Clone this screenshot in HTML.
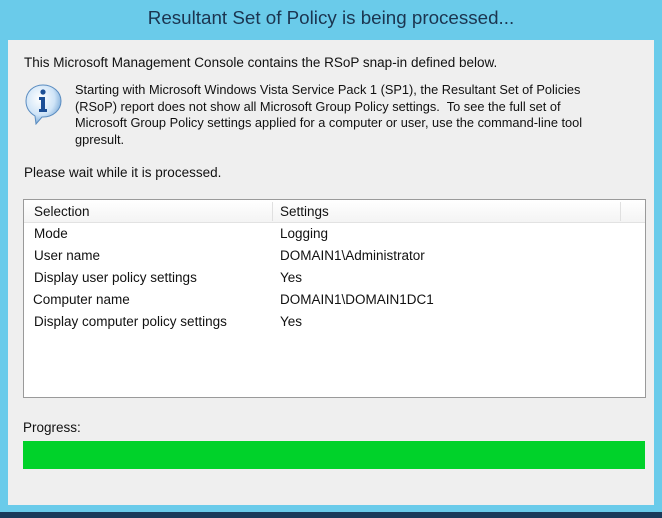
<!DOCTYPE html>
<html><head><style>
body{margin:0;width:662px;height:518px;background:#6acbea;position:relative;overflow:hidden;font-family:"Liberation Sans",sans-serif;font-size:13.5px;color:#111;}
.title{position:absolute;left:0;top:7px;width:662px;text-align:center;font-size:18.8px;color:#1b3550;}
.client{position:absolute;left:8px;top:40px;width:646px;height:465px;background:#efefef;}
.bottom{position:absolute;left:0;top:512px;width:662px;height:6px;background:#1a3a5a;}
.t{position:absolute;white-space:nowrap;}
.table{position:absolute;left:23px;top:199px;width:621px;height:197px;background:#fff;border:1px solid #9a9a9a;}
.hdr{position:absolute;left:0;top:0;width:621px;height:22px;background:linear-gradient(#fff,#f4f4f4);border-bottom:1px solid #e2e2e2;}
.bar{position:absolute;left:23px;top:441px;width:622px;height:28px;background:#00d22a;}
</style></head><body>
<div class="title">Resultant Set of Policy is being processed...</div>
<div class="client"></div>
<div class="bottom"></div>
<div class="t" style="left:24px;top:55px">This Microsoft Management Console contains the RSoP snap-in defined below.</div>
<svg style="position:absolute;left:24px;top:83px" width="40" height="42" viewBox="0 0 40 42">
<defs><radialGradient id="g" cx="0.4" cy="0.35" r="0.7"><stop offset="0" stop-color="#fff"/><stop offset="0.6" stop-color="#cfe4f7"/><stop offset="1" stop-color="#6a9fd2"/></radialGradient></defs>
<path d="M19 2C9 2 2 9 2 18c0 7 4 12 9 15l1 8 6-7c1 0 1 0 1 0 10 0 18-7 18-16S29 2 19 2z" fill="url(#g)" stroke="#5a8cc0" stroke-width="1"/>
<circle cx="19" cy="9" r="2.6" fill="#1c4f96"/>
<path d="M15 14h6v12h2v3h-8v-3h2v-9h-2z" fill="#1c4f96"/>
</svg>
<div class="t" style="left:75px;top:82px;line-height:16.5px;font-size:12.8px">Starting with Microsoft Windows Vista Service Pack 1 (SP1), the Resultant Set of Policies<br>(RSoP) report does not show all Microsoft Group Policy settings.&nbsp; To see the full set of<br>Microsoft Group Policy settings applied for a computer or user, use the command-line tool<br>gpresult.</div>
<div class="t" style="left:24px;top:165px">Please wait while it is processed.</div>
<div class="table"><div class="hdr"></div>
<div style="position:absolute;left:248px;top:2px;width:1px;height:19px;background:#e0e0e0"></div>
<div style="position:absolute;left:596px;top:2px;width:1px;height:19px;background:#e0e0e0"></div>
</div>
<div class="t" style="left:34px;top:204px">Selection</div><div class="t" style="left:280px;top:204px">Settings</div>
<div class="t" style="left:34px;top:226px">Mode</div><div class="t" style="left:280px;top:226px">Logging</div>
<div class="t" style="left:34px;top:248px">User name</div><div class="t" style="left:280px;top:248px">DOMAIN1\Administrator</div>
<div class="t" style="left:34px;top:270px">Display user policy settings</div><div class="t" style="left:280px;top:270px">Yes</div>
<div class="t" style="left:33px;top:292px">Computer name</div><div class="t" style="left:280px;top:292px">DOMAIN1\DOMAIN1DC1</div>
<div class="t" style="left:34px;top:314px">Display computer policy settings</div><div class="t" style="left:280px;top:314px">Yes</div>
<div class="t" style="left:23px;top:420px">Progress:</div>
<div class="bar"></div>
</body></html>
